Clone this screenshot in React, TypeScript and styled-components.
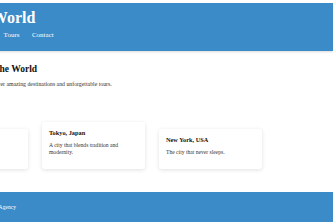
import styled, { createGlobalStyle } from "styled-components";

const GlobalStyle = createGlobalStyle`
  body {
    margin: 0;
    background: #ffffff;
    font-family: "Liberation Serif", "Times New Roman", serif;
    color: #222;
    overflow: hidden;
  }
`;

const Page = styled.div`
  margin-left: -80px;
  padding-top: 3px;
  width: calc(100% + 80px);
`;

const Header = styled.header`
  background: #3a8bc8;
  color: #fff;
  padding: 7px 0 12px 24px;
  box-shadow: 0 1px 2px rgba(0, 0, 0, 0.15);
  h1 {
    margin: 0;
    font-size: 16px;
    line-height: 16px;
    font-weight: bold;
  }
`;

const Nav = styled.ul`
  display: flex;
  gap: 12.5px;
  list-style: none;
  margin: 5px 0 0;
  padding-left: 30px;
  li {
    font-size: 7px;
    line-height: 8px;
  }
`;

const Main = styled.main`
  padding: 13px 0 23px 5px;
`;

const Title = styled.h2`
  margin: 0 0 0 37px;
  font-size: 9.5px;
  line-height: 10px;
  font-weight: bold;
  color: #111;
`;

const Lead = styled.p`
  margin: 7px 0 0 59px;
  font-size: 5.8px;
  line-height: 7px;
  color: #333;
`;

const Cards = styled.div`
  display: flex;
  align-items: flex-end;
  gap: 14px;
  margin-top: 34px;
`;

const Card = styled.div`
  box-sizing: border-box;
  width: 103px;
  padding: 7px 7px 8px;
  background: #fff;
  border-radius: 3px;
  box-shadow: 0 1px 4px rgba(0, 0, 0, 0.12);
  h3 {
    margin: 0 0 6px;
    font-size: 6.3px;
    line-height: 7px;
    font-weight: bold;
    color: #111;
  }
  p {
    margin: 0 0 5px;
    font-size: 5.6px;
    line-height: 7px;
    color: #333;
  }
`;

const Footer = styled.footer`
  background: #3a8bc8;
  color: #fff;
  padding: 12px 0 16px 45px;
  font-size: 5.6px;
  line-height: 7px;
`;

const tours = [
  { city: "Paris, France", text: "The city of lights and love." },
  { city: "Tokyo, Japan", text: "A city that blends tradition and modernity." },
  { city: "New York, USA", text: "The city that never sleeps." },
];

const App = () => {
  return (
    <>
      <GlobalStyle />
      <Page>
        <Header>
          <h1>Travel World</h1>
          <Nav>
            <li>Home</li>
            <li>Tours</li>
            <li>Contact</li>
          </Nav>
        </Header>
        <Main>
          <Title>Explore the World</Title>
          <Lead>Discover amazing destinations and unforgettable tours.</Lead>
          <Cards>
            {tours.map((t) => (
              <Card key={t.city}>
                <h3>{t.city}</h3>
                <p>{t.text}</p>
              </Card>
            ))}
          </Cards>
        </Main>
        <Footer>© 2024 Travel Agency</Footer>
      </Page>
    </>
  );
};

export default App;
